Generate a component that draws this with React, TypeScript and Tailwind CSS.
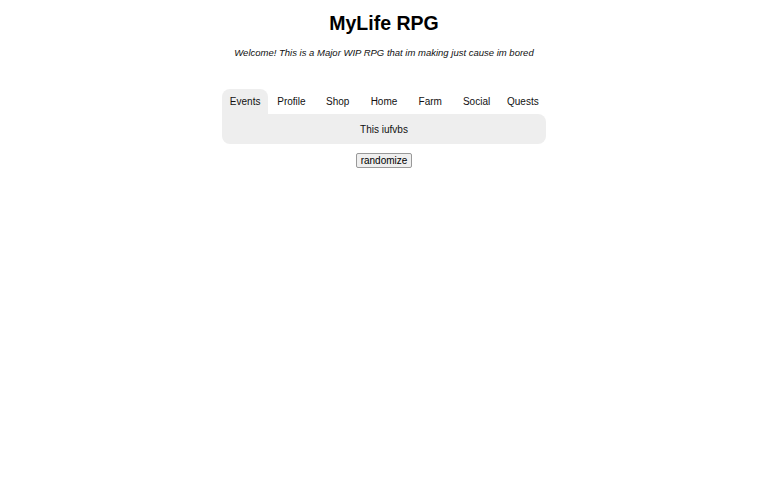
import { useState } from "react";

const tabs = ["Events", "Profile", "Shop", "Home", "Farm", "Social", "Quests"];

export default function App() {
  const [active, setActive] = useState(0);
  return (
    <div className="min-h-screen bg-white text-black" style={{ fontFamily: '"Liberation Sans", Arial, sans-serif' }}>
      <div className="flex flex-col items-center pt-[12px]">
        <h1 className="text-[19.5px] font-bold leading-[22px]">MyLife RPG</h1>
        <p className="mt-[13px] text-[9.5px] italic leading-[12px] text-[#111]">
          Welcome! This is a Major WIP RPG that im making just cause im bored
        </p>
        <div className="mt-[30px] w-[324px]">
          <div className="grid grid-cols-7">
            {tabs.map((t, i) => (
              <button
                key={t}
                onClick={() => setActive(i)}
                className={
                  "h-[25px] text-[10px] leading-[25px] text-center text-[#111] " +
                  (i === active ? "bg-[#eeeeee] rounded-t-[8px]" : "bg-white")
                }
              >
                {t}
              </button>
            ))}
          </div>
          <div className={"bg-[#eeeeee] h-[30px] flex items-center justify-center text-[10px] text-[#111] rounded-b-[8px] " + (active === 0 ? "rounded-tr-[8px]" : "rounded-t-[8px]")}>
            This iufvbs
          </div>
        </div>
        <button className="mt-[9px] h-[15px] px-[4px] text-[10px] leading-[13px] bg-[#efefef] border border-[#999999] rounded-[2px]">
          randomize
        </button>
      </div>
    </div>
  );
}
